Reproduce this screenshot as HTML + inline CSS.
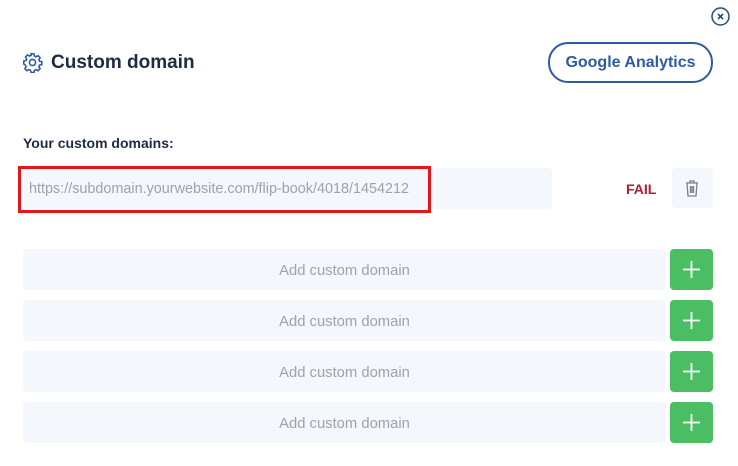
<!DOCTYPE html><html><head><style>
body{margin:0;width:738px;height:466px;background:#fff;font-family:"Liberation Sans",sans-serif;position:relative;overflow:hidden}
.a{position:absolute}
.in{background:#f4f7fc;border-radius:4px}
.row{left:23px;width:643px;height:41px;color:#9aa3ae;font-size:14.8px;text-align:center;line-height:44px}
.plus{left:670px;width:43px;height:41px;background:#4bbd63;border-radius:4px}
</style></head><body>
<svg class="a" style="left:710px;top:6px" width="21" height="21"><circle cx="10.5" cy="10.5" r="8.5" fill="none" stroke="#2b4a7e" stroke-width="1.5"/><path d="M8 8l5 5M13 8l-5 5" stroke="#2b4a7e" stroke-width="1.6"/></svg>
<svg class="a" style="left:22px;top:52px" width="21" height="21" viewBox="0 0 24 24"><path fill="none" stroke="#2d5aa0" stroke-width="1.8" d="M10.3 2h3.4l.5 2.6 1.8.9 2.3-1.4 2.4 2.4-1.4 2.3.8 1.8 2.6.5v3.4l-2.6.5-.8 1.8 1.4 2.3-2.4 2.4-2.3-1.4-1.8.8-.5 2.6h-3.4l-.5-2.6-1.8-.8-2.3 1.4-2.4-2.4 1.4-2.3-.8-1.8L2 13.7v-3.4l2.6-.5.8-1.8L4 5.7l2.4-2.4 2.3 1.4 1.8-.9z"/><circle cx="12" cy="12" r="3.5" fill="none" stroke="#2d5aa0" stroke-width="1.8"/></svg>
<div class="a" style="left:51px;top:52px;font-size:19px;font-weight:bold;color:#1e2b42">Custom domain</div>
<div class="a" style="left:548px;top:42px;width:161px;height:37px;border:2px solid #2d5aa0;border-radius:20px;color:#2d5aa0;font-weight:bold;font-size:16px;text-align:center;line-height:37px">Google Analytics</div>
<div class="a" style="left:23px;top:135px;font-size:14px;font-weight:bold;color:#1e2b42">Your custom domains:</div>
<div class="a in" style="left:23px;top:168px;width:529px;height:41px"></div>
<div class="a" style="left:18px;top:166px;width:407px;height:41px;border:3px solid #e3161a"></div>
<div class="a" style="left:29px;top:181px;font-size:14.4px;color:#9aa3ae">https://subdomain.yourwebsite.com/flip-book/4018/1454212</div>
<div class="a" style="left:626px;top:181px;font-size:14px;font-weight:bold;color:#b5183a">FAIL</div>
<div class="a in" style="left:672px;top:168px;width:41px;height:40px"></div>
<svg class="a" style="left:684px;top:179px" width="16" height="19"><path d="M2 4h12M6 4V2h4v2M3 4l1 13h8l1-13M6.5 7v7M8 7v7M9.5 7v7" fill="none" stroke="#7a818b" stroke-width="1.3"/></svg>
<div class="a in row" style="top:249px">Add custom domain</div><svg class="a plus" style="top:249px" width="43" height="41"><path d="M13 20.5h17M21.5 12v17" stroke="#fff" stroke-width="1.8"/></svg>
<div class="a in row" style="top:300px">Add custom domain</div><svg class="a plus" style="top:300px" width="43" height="41"><path d="M13 20.5h17M21.5 12v17" stroke="#fff" stroke-width="1.8"/></svg>
<div class="a in row" style="top:351px">Add custom domain</div><svg class="a plus" style="top:351px" width="43" height="41"><path d="M13 20.5h17M21.5 12v17" stroke="#fff" stroke-width="1.8"/></svg>
<div class="a in row" style="top:402px">Add custom domain</div><svg class="a plus" style="top:402px" width="43" height="41"><path d="M13 20.5h17M21.5 12v17" stroke="#fff" stroke-width="1.8"/></svg>
</body></html>
